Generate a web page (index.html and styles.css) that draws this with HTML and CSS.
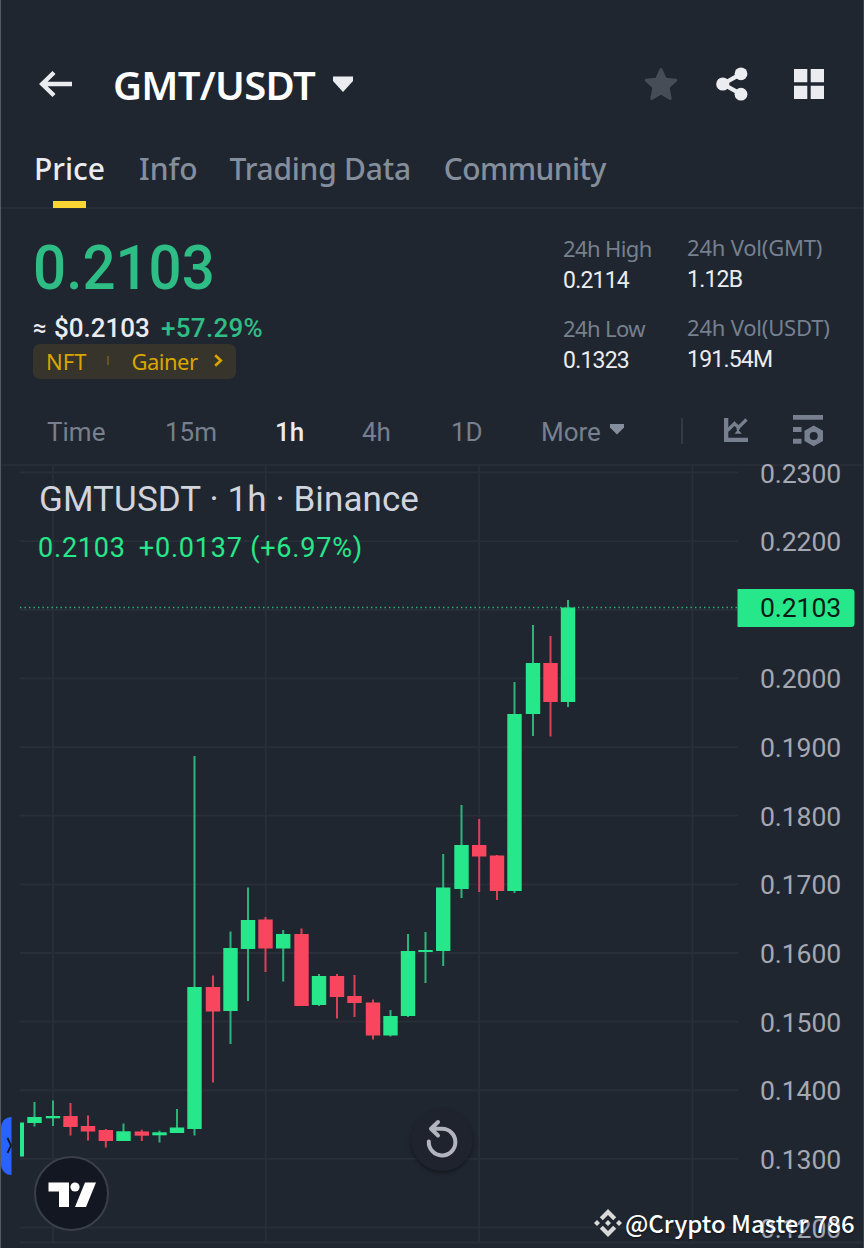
FILE: index.html
```html
<!DOCTYPE html>
<html lang="en">
<head>
    <meta charset="UTF-8">
    <meta name="viewport" content="width=device-width, initial-scale=1.0">
    <title>GMT/USDT</title>
    <link rel="stylesheet" href="styles.css">
</head>
<body>
    <div class="app">
        <header class="header">
            <svg class="back" width="34" height="28" viewBox="0 0 34 28" fill="none" stroke="#eaecef" stroke-width="4.4">
                <path d="M33 14H4M15 2.5L3.2 14L15 25.5"/>
            </svg>
            <h1 class="pair">GMT/USDT</h1>
            <svg class="pair-arrow" width="22" height="17" viewBox="0 0 22 17" fill="#eaecef">
                <path d="M1 0.5H21V5L11 16L1 5Z"/>
            </svg>
            <div class="actions">
                <svg width="34" height="34" viewBox="0 0 34 34" fill="#474d57" stroke="#474d57" stroke-width="3" stroke-linejoin="round">
                    <path d="M17 2.5L21.3 12.2L31.8 13.2L24 20.4L26.2 31.5L17 26L7.8 31.5L10 20.4L2.2 13.2L12.7 12.2Z"/>
                </svg>
                <svg width="32" height="34" viewBox="0 0 32 34" fill="#eaecef">
                    <path d="M25 6.8L7 17L25 27.2" fill="none" stroke="#eaecef" stroke-width="4.2"/>
                    <circle cx="25" cy="6.8" r="6.4"/>
                    <circle cx="6.8" cy="17" r="6.6"/>
                    <circle cx="25" cy="27.2" r="6.4"/>
                </svg>
                <svg width="30" height="30" viewBox="0 0 30 30" fill="#eaecef">
                    <path d="M0 0H13.3V13.3H0ZM16.7 0H30V13.3H16.7ZM0 16.7H13.3V30H0ZM16.7 16.7H30V30H16.7Z"/>
                </svg>
            </div>
        </header>

        <nav class="tabs">
            <a class="tab active">Price</a>
            <a class="tab info">Info</a>
            <a class="tab trading">Trading Data</a>
            <a class="tab community">Community</a>
        </nav>

        <section class="ticker">
            <div class="quote">
                <div class="last">0.2103</div>
                <div class="sub"><span class="approx">≈</span><span class="usd">$0.2103</span><span class="change">+57.29%</span></div>
                <div class="tags">
                    <span>NFT</span>
                    <i class="sep"></i>
                    <span class="gainer">Gainer</span>
                    <svg width="9" height="13" viewBox="0 0 9 13" fill="none" stroke="#d9a600" stroke-width="2.6"><path d="M1.2 1.2L6.8 6.5L1.2 11.8"/></svg>
                </div>
            </div>
            <div class="stats">
                <div class="stat"><span class="name">24h High</span><span class="value">0.2114</span></div>
                <div class="stat right"><span class="name">24h Vol(GMT)</span><span class="value">1.12B</span></div>
                <div class="stat"><span class="name">24h Low</span><span class="value">0.1323</span></div>
                <div class="stat right"><span class="name">24h Vol(USDT)</span><span class="value">191.54M</span></div>
            </div>
        </section>

        <div class="intervals">
            <span class="i-time">Time</span>
            <span class="i-15m">15m</span>
            <span class="i-1h active">1h</span>
            <span class="i-4h">4h</span>
            <span class="i-1d">1D</span>
            <span class="i-more">More</span>
            <svg class="more-arrow" width="14" height="11" viewBox="0 0 14 11" fill="#848e9c"><path d="M0 0H14V3.5L7 10.5L0 3.5Z"/></svg>
            <i class="bar"></i>
            <svg class="indicator" width="24" height="24" viewBox="0 0 24 24" fill="#76808e">
                <path d="M0 0H4.3V19.7H24V24H0Z"/>
                <path d="M3.5 12.5L10.5 5.5L14.5 9.5L22.5 1.5" fill="none" stroke="#76808e" stroke-width="3.2"/>
                <path d="M12 10.5H16L14.8 12.5L18 15.8H10.5L13.2 12.5Z"/>
            </svg>
            <svg class="settings" width="30" height="32" viewBox="0 0 30 32" fill="#76808e">
                <path d="M0 0H30V4.8H0ZM0 12H8.5V17H0ZM0 23.7H8.5V28.7H0Z"/>
                <path fill-rule="evenodd" d="M20.7 10.5L30 15.8V26L20.7 31.3L11.5 26V15.8ZM20.7 17A4 4 0 1 0 20.7 25A4 4 0 1 0 20.7 17Z"/>
            </svg>
        </div>

        <main class="chart">
            <svg id="plot" width="864" height="784" viewBox="0 464 864 784"></svg>
            <div class="legend">
                <div class="symbol">GMTUSDT · 1h · Binance</div>
                <div class="delta"><span>0.2103</span><span>+0.0137 (+6.97%)</span></div>
            </div>
            <svg class="drawer" width="13" height="58" viewBox="0 0 13 58">
                <path d="M11.5 0V58C5 58 1 53 1 47V11C1 5 5 0 11.5 0Z" fill="#2962ff"/>
                <path d="M7.5 21L11 28.5L7.5 36" fill="none" stroke="#131722" stroke-width="1.8"/>
            </svg>
            <div class="tv-logo">
                <svg width="48" height="26" viewBox="0 0 48 26" fill="#fff">
                    <path d="M0.5 0.5H21V25H11V9.5H0.5Z"/>
                    <circle cx="27" cy="5" r="4.6"/>
                    <path d="M37 0.5H48L38 25H27Z"/>
                </svg>
            </div>
            <div class="reset">
                <svg width="34" height="40" viewBox="0 0 34 40" fill="none" stroke="#b2b5be" stroke-width="4" stroke-linecap="round" stroke-linejoin="round">
                    <path d="M3.8 22.5A13.3 13.3 0 1 0 17 9.8H6M13 3L6 9.8L13 16.5"/>
                </svg>
            </div>
            <div class="watermark">
                <svg width="28" height="28" viewBox="0 0 28 28" fill="#d9d9d9">
                    <path d="M14 0L22.2 8.2L19.2 11.2L14 6L8.8 11.2L5.8 8.2Z"/>
                    <path d="M14 28L22.2 19.8L19.2 16.8L14 22L8.8 16.8L5.8 19.8Z"/>
                    <path d="M14 11L17 14L14 17L11 14ZM3 11L6 14L3 17L0 14ZM25 11L28 14L25 17L22 14Z"/>
                </svg>
                <span>@Crypto Master 786</span>
            </div>
        </main>
    </div>
    <script src="script.js"></script>
</body>
</html>
```
FILE: styles.css
```css
body {
    margin: 0;
    background: #202630;
    color: #eaecef;
    font-family: "Noto Sans", sans-serif;
}
svg {
    display: block;
    flex-shrink: 0;
}
.app {
    width: 864px;
    height: 1248px;
    box-sizing: border-box;
    border-left: 1px solid #555a64;
    border-right: 1px solid #3c424c;
    overflow: hidden;
}

/* header */
.header {
    display: flex;
    align-items: center;
    height: 68px;
    padding: 50px 39px 1px 38px;
}
.pair {
    margin: 1px 0 0 40px;
    width: 202px;
    font-size: 40px;
    font-weight: 600;
    line-height: 50px;
    letter-spacing: -0.7px;
    color: #fff;
    white-space: nowrap;
}
.pair-arrow {
    margin-left: 17px;
}
.actions {
    display: flex;
    align-items: center;
    margin-left: auto;
}
.actions svg + svg {
    margin-left: 38px;
}
.actions svg:last-child {
    margin-left: 46px;
}

/* tabs */
.tabs {
    display: flex;
    height: 89px;
    padding-left: 33px;
    border-bottom: 2px solid #272d37;
    box-sizing: border-box;
    margin-top: 1px;
}
.tab {
    height: 88px;
    margin-right: 33px;
    font-size: 30px;
    font-weight: 500;
    line-height: 97px;
    color: #848e9c;
    white-space: nowrap;
}
.tab.active {
    position: relative;
    color: #eaecef;
}
.tab.active::after {
    content: "";
    position: absolute;
    left: 19px;
    bottom: 0;
    width: 33px;
    height: 7px;
    background: #fcd535;
}
.tab.info {
    margin-left: 1px;
    margin-right: 32px;
}
.tab.trading {
    letter-spacing: -0.25px;
}
.tab.community {
    letter-spacing: -0.6px;
}

/* ticker */
.ticker {
    display: flex;
    justify-content: space-between;
    height: 189px;
    padding-left: 32px;
}
.last {
    margin-top: 26px;
    font: 500 61px/66px Roboto, sans-serif;
    color: #2ebd85;
    white-space: nowrap;
    transform: scaleX(0.955);
    transform-origin: 2px 50%;
}
.sub {
    display: flex;
    height: 30px;
    margin-top: 12px;
    font: 500 26px/30px Roboto, sans-serif;
    white-space: nowrap;
}
.approx {
    width: 21px;
    font-size: 24px;
}
.usd {
    width: 107px;
}
.change {
    color: #2ebd85;
    letter-spacing: 0.3px;
}
.tags {
    display: flex;
    align-items: center;
    width: 203px;
    height: 35px;
    margin-top: 1px;
    padding: 0 0 2px 13px;
    box-sizing: border-box;
    border-radius: 7px;
    background: #37342b;
    color: #d9a600;
    font-size: 22px;
}
.sep {
    width: 2px;
    height: 9px;
    margin: 0 22px 0 21px;
    background: #66531f;
}
.gainer {
    width: 83px;
    letter-spacing: -0.5px;
}
.stats {
    display: grid;
    grid-template-columns: 124px 176px;
    grid-auto-rows: 80px;
    padding-top: 23px;
}
.stat {
    display: flex;
    flex-direction: column;
}
.stat.right {
    margin-top: -1px;
}
.name {
    font-size: 22px;
    line-height: 32px;
    letter-spacing: -0.6px;
    color: #76808e;
    white-space: nowrap;
}
.right .name {
    letter-spacing: -0.2px;
}
.value {
    font: 400 23px/34px Roboto, sans-serif;
    letter-spacing: -0.8px;
}

/* intervals */
.intervals {
    display: flex;
    align-items: center;
    height: 66px;
    padding-left: 46px;
    border-bottom: 2px solid #272d37;
    font: 400 26px/34px Roboto, sans-serif;
    color: #76808e;
}
.intervals span {
    padding-top: 2px;
}
.intervals .active {
    color: #eaecef;
    font-weight: 500;
}
.i-time { width: 118px; }
.i-15m { width: 110px; }
.i-1h { width: 87px; }
.i-4h { width: 89px; }
.i-1d { width: 90px; }
.i-more { width: 69px; }
.more-arrow {
    margin-bottom: 4px;
}
.bar {
    width: 2px;
    height: 26px;
    margin: 0 41px 0 57px;
    background: #333a45;
}
.indicator {
    margin-bottom: 2px;
}
.settings {
    margin-left: 45px;
}

/* chart */
.chart {
    position: relative;
    margin: -2px 0 0 -1px;
}
.legend {
    position: absolute;
    left: 38px;
    top: 15px;
    font-family: Roboto, sans-serif;
}
.symbol {
    font-size: 35px;
    line-height: 42px;
    letter-spacing: 0.1px;
    color: #d1d4dc;
    padding-left: 1px;
}
.delta {
    display: flex;
    gap: 13px;
    margin-top: 10px;
    font-size: 27px;
    line-height: 34px;
    letter-spacing: 0.8px;
    color: #26e88a;
}
.drawer {
    position: absolute;
    left: 0;
    top: 653px;
}
.tv-logo {
    position: absolute;
    left: 34px;
    top: 692px;
    display: flex;
    align-items: center;
    justify-content: center;
    width: 71px;
    height: 71px;
    border: 2px solid #3a3f4a;
    border-radius: 50%;
    background: #131722;
}
.tv-logo svg {
    margin-top: 2px;
}
.reset {
    position: absolute;
    left: 411px;
    top: 645px;
    display: flex;
    align-items: center;
    justify-content: center;
    width: 62px;
    height: 62px;
    border-radius: 50%;
    background: #1f232d;
    box-shadow: 0 2px 4px rgba(0, 0, 0, 0.4);
}
.reset svg {
    margin-bottom: 3px;
}
.watermark {
    position: absolute;
    left: 594px;
    top: 741px;
    display: flex;
    align-items: center;
    gap: 3px;
    color: #fff;
    font: 500 24px/36px "Noto Sans CJK SC", sans-serif;
    text-shadow: 0 1px 2px rgba(0, 0, 0, 0.6);
    white-space: nowrap;
}

/* plot */
.grid {
    stroke: #292f39;
    stroke-width: 1.8;
}
.axis {
    font: 26.6px Roboto, sans-serif;
    letter-spacing: -0.1px;
    fill: #a4a8b3;
}
.axis.current {
    fill: #0c1a14;
}
.up { fill: #26e88a; }
.down { fill: #f7465d; }
.up-wick { fill: #2bb478; }
.down-wick { fill: #dc4058; }
```
FILE: script.js
```js
// x, high, body top, body bottom, low, direction
const candles = [
    [34.5, 1102, 1117, 1123, 1126.5, 'up'],
    [53, 1100.5, 1116, 1118.3, 1126, 'up'],
    [70.5, 1103, 1116, 1127, 1135.5, 'down'],
    [88, 1115.5, 1126, 1131.5, 1140.5, 'down'],
    [105.8, 1129, 1130, 1141, 1147.5, 'down'],
    [123.5, 1123.5, 1131.3, 1141, 1141, 'up'],
    [141.8, 1129.7, 1131.5, 1135.7, 1141, 'down'],
    [159.5, 1130.7, 1132.3, 1135.3, 1142.5, 'up'],
    [177, 1109, 1127.5, 1133, 1133, 'up'],
    [194.5, 756, 987, 1129, 1135.5, 'up'],
    [213, 975.5, 987, 1011.5, 1082.5, 'down'],
    [230.5, 931.5, 948, 1011, 1044, 'up'],
    [248, 887.5, 920, 949, 1001, 'up'],
    [265.5, 917, 919.5, 948.5, 972, 'down'],
    [283.2, 930, 934, 948.5, 981.5, 'up'],
    [301.5, 928.5, 934, 1006, 1006, 'down'],
    [319, 974, 976, 1005, 1006, 'up'],
    [337, 974, 976, 997, 1018.5, 'down'],
    [354.5, 975, 996, 1003, 1017, 'down'],
    [373, 999.5, 1002.5, 1035.5, 1039.5, 'down'],
    [390.5, 1010, 1016, 1035.5, 1036.5, 'up'],
    [408, 934, 951, 1016, 1017, 'up'],
    [425.5, 932, 950, 952, 983, 'up'],
    [443.2, 854, 887.5, 951, 966, 'up'],
    [461.5, 805, 845, 889, 898, 'up'],
    [479.2, 819, 845, 856.5, 892, 'down'],
    [497, 855, 855.5, 891, 900, 'down'],
    [514.5, 682, 714, 891, 893, 'up'],
    [533, 625, 663, 714, 736, 'up'],
    [550.5, 636, 663, 702, 736.5, 'down'],
    [568, 600, 607.5, 702, 707, 'up']
];

let svg = '';

// Grid and price scale
for (let i = 0; i < 12; i++) {
    const y = 472.5 + i * 68.64;
    const price = (0.23 - i * 0.01).toFixed(4);
    svg += `<line class="grid" x1="20" y1="${y}" x2="738" y2="${y}"/>`;
    if (i !== 2) {
        svg += `<text class="axis" x="760" y="${y + 10}">${price}</text>`;
    }
}
[53, 265.7, 479.2, 692.5].forEach(x => {
    svg += `<line class="grid" x1="${x}" y1="464" x2="${x}" y2="1242"/>`;
});
svg += '<line class="grid" x1="20" y1="1242.5" x2="864" y2="1242.5"/>';

// Candles
svg += '<rect class="up" x="20" y="1122.5" width="4" height="34"/>';
candles.forEach(([x, high, top, bottom, low, dir]) => {
    svg += `<rect class="${dir}-wick" x="${x - 1}" y="${high}" width="2" height="${low - high}"/>`;
    svg += `<rect class="${dir}" x="${x - 7.2}" y="${top}" width="14.4" height="${bottom - top}"/>`;
});

// Last price
svg += '<line x1="20" y1="607.5" x2="738" y2="607.5" stroke="#2bb478" stroke-width="1.4" stroke-dasharray="1.4 3.1"/>';
svg += '<path class="up" d="M737.5 589H851Q854.5 589 854.5 592.5V623.5Q854.5 627 851 627H737.5Z"/>';
svg += '<text class="axis current" x="760" y="617">0.2103</text>';

document.getElementById('plot').innerHTML = svg;
```
